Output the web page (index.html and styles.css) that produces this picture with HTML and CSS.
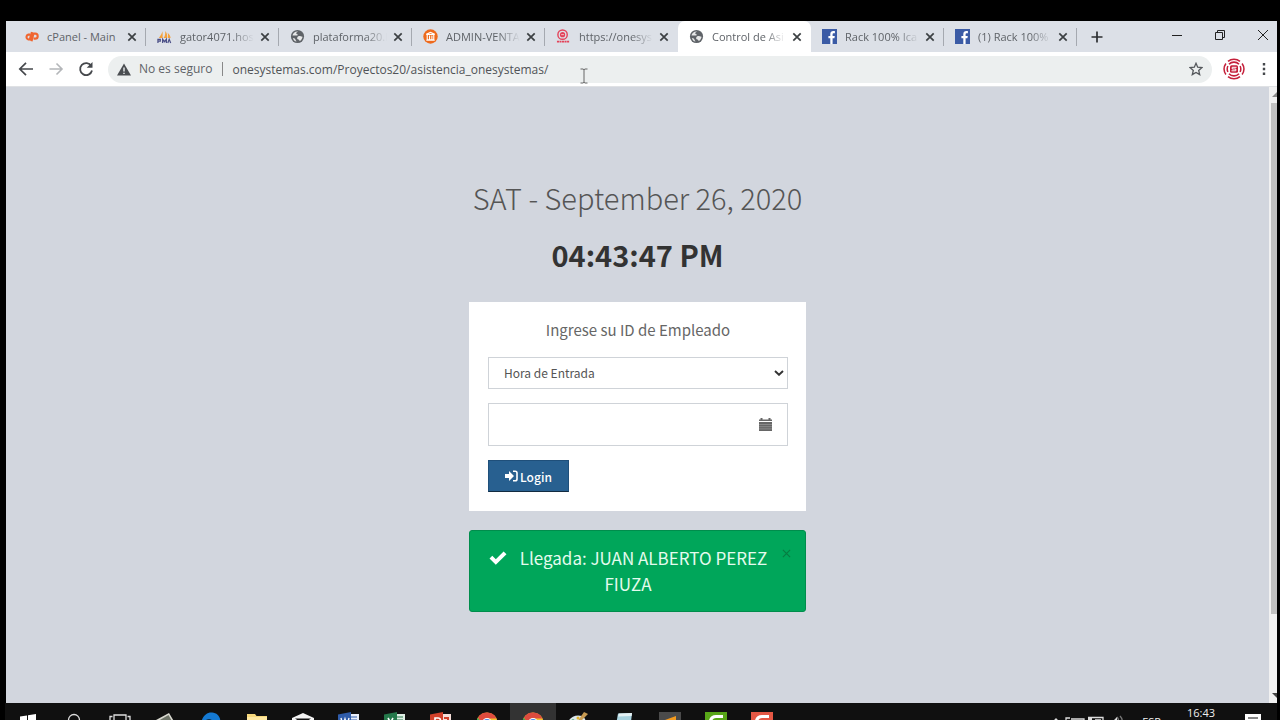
FILE: index.html
```html
<!DOCTYPE html>
<html lang="es">
<head>
<meta charset="utf-8">
<title>Control de Asistencia</title>
<link rel="stylesheet" href="styles.css">
</head>
<body>
<svg class="defs" aria-hidden="true">
  <symbol id="x" viewBox="0 0 10 10"><path d="M1.300 1.300l7.400 7.400M8.700 1.300L1.300 8.700" stroke="#3c4043" stroke-width="1.700" fill="none"/></symbol>
  <symbol id="globe" viewBox="0 0 16 16"><circle cx="8" cy="8" r="7" fill="#5f6368"/><path d="M8.600 2.600c-1 .9-2.300 1-1.900 2.100.3.900 1.700.5 1.700 1.500 0 1-1.700.7-2.900.7L2.700 7C3 4.500 5.200 2.400 8.600 2.600zM9.300 7.500c1.600-.2 2.400.7 4.100.7-.2 2-1.400 3.800-3.200 4.700-.2-1.400-.9-1.700-2-2-1-.3-.8-2.900 1.100-3.400zM3 9.500c1.800.2 2.700.8 2.900 2 .1.800.8.9 1 1.800C5 13 3.500 11.600 3 9.500z" fill="#fff" opacity=".85"/></symbol>
  <symbol id="fb" viewBox="0 0 15 15"><path d="M0 0h15v15H0z" fill="#3b5ba5"/><path d="M8.300 15V9.200H6.400V6.900h1.900V5.200c0-2 1.200-3.100 3-3.100.9 0 1.600.1 1.600.1v2h-1c-1 0-1.300.6-1.300 1.200v1.500h2.200l-.4 2.300h-1.800V15z" fill="#fff"/></symbol>
  <symbol id="rings" viewBox="0 0 22 22"><g fill="none" stroke="#c41f3a"><path d="M5 3.300A9.600 9.600 0 0 1 17 3.300M5 18.700A9.600 9.600 0 0 0 17 18.700M6 6.300A6.800 6.800 0 0 1 16 6.300M6 15.700A6.800 6.800 0 0 0 16 15.700" stroke-width="1.600"/><path d="M2.900 5.500A9.800 9.800 0 0 0 2.900 16.500M19.100 5.500A9.800 9.800 0 0 1 19.100 16.500M4.900 8a7 7 0 0 0 0 6M17.100 8a7 7 0 0 1 0 6" stroke-width="1.500"/></g><rect x="7" y="7.200" width="8" height="7.600" rx="1.500" fill="#c41f3a"/><path d="M13.500 9.300h-4.300V11h3.600v1.800H8.500" stroke="#fff" stroke-width="1" fill="none"/></symbol>
  <symbol id="chrome" viewBox="0 0 22 22"><circle cx="11" cy="11" r="10.500" fill="#f2c230"/><path d="M1.900 5.800A10.500 10.500 0 0 1 20.500 6.500H11L7 13z" fill="#dd4b3e"/><path d="M1.900 5.800A10.500 10.500 0 0 0 11 21.500L14 14H7z" fill="#35a853"/><circle cx="11" cy="11" r="5" fill="#fff"/><circle cx="11" cy="11" r="4" fill="#4a86e8"/></symbol>
</svg>
<div class="window">
  <header class="tabs">
    <div class="tab"><svg class="fav" viewBox="0 0 16 16"><g fill="none" stroke="#f0652f" stroke-width="2.300"><path d="M6.500 6H4.600a2.700 2.700 0 0 0 0 5.200h1.600L8.500 3.200M8 13L10 5h2a2.500 2.500 0 0 1 0 5.200H10.300"/></g></svg><span class="name">cPanel - Main</span><button class="close" aria-label="Cerrar"><svg><use href="#x"/></svg></button></div>
    <div class="tab"><svg class="fav" viewBox="0 0 16 16"><path d="M2 9.500C4 7 5.500 4 6 2.500V9.500zM7 9.500C9 7 9 4 8.700 2c2 2 2.500 5 2 7.500zM11.500 9.500c.5-2 .3-4-.2-5.500 2 1.500 3 3.500 3.200 5.500z" fill="#f5a13a"/><path d="M1 15v-4h2.500v2H1M6 15v-4l2 2.500L10 11v4M11.500 15l1.500-4 1.600 4" fill="none" stroke="#4b4f87" stroke-width="1.300"/></svg><span class="name">gator4071.hos</span><button class="close" aria-label="Cerrar"><svg><use href="#x"/></svg></button></div>
    <div class="tab"><svg class="fav"><use href="#globe"/></svg><span class="name">plataforma20.l</span><button class="close" aria-label="Cerrar"><svg><use href="#x"/></svg></button></div>
    <div class="tab"><svg class="fav" viewBox="0 0 16 16"><circle cx="8" cy="8" r="7.700" fill="#ee6a1c"/><path d="M3.500 5.700L8 3.500l4.500 2.200zM4.500 6.500v5h7v-5M3.500 12h9M7 7v4M9.500 7v4" fill="none" stroke="#fff" stroke-width="1.200"/></svg><span class="name">ADMIN-VENTA</span><button class="close" aria-label="Cerrar"><svg><use href="#x"/></svg></button></div>
    <div class="tab"><svg class="fav" viewBox="0 0 16 16"><circle cx="7" cy="6" r="5" fill="none" stroke="#e3435a" stroke-width="1.500"/><circle cx="7" cy="6" r="2.800" fill="#e3435a"/><path d="M5.500 6h3" stroke="#f5c3cb"/><path d="M1 13.500h13" stroke="#e3435a" stroke-width="2" stroke-dasharray="2.200 .5"/></svg><span class="name">https://onesys</span><button class="close" aria-label="Cerrar"><svg><use href="#x"/></svg></button></div>
    <div class="tab active"><svg class="fav"><use href="#globe"/></svg><span class="name">Control de Asi</span><button class="close" aria-label="Cerrar"><svg><use href="#x"/></svg></button></div>
    <div class="tab"><svg class="fav"><use href="#fb"/></svg><span class="name">Rack 100% Ica</span><button class="close" aria-label="Cerrar"><svg><use href="#x"/></svg></button></div>
    <div class="tab"><svg class="fav"><use href="#fb"/></svg><span class="name">(1) Rack 100%</span><button class="close" aria-label="Cerrar"><svg><use href="#x"/></svg></button></div>
    <button class="new" aria-label="Nueva pestaña"><svg viewBox="0 0 12 12"><path d="M6 .5v11M.5 6h11" stroke="#2c2e31" stroke-width="1.700"/></svg></button>
    <div class="controls">
      <button aria-label="Minimizar"><svg viewBox="0 0 12 12"><path d="M1 6.500h10" stroke="#222"/></svg></button>
      <button aria-label="Restaurar"><svg viewBox="0 0 12 12"><path d="M1.500 3.500h7v7h-7zM3.500 3.500v-2h7v7h-2" fill="none" stroke="#222"/></svg></button>
      <button aria-label="Cerrar ventana"><svg viewBox="0 0 12 12"><path d="M1 1l10 10M11 1L1 11" stroke="#222"/></svg></button>
    </div>
  </header>
  <nav class="toolbar">
    <button class="nav" aria-label="Atrás"><svg viewBox="0 0 16 16"><path d="M15 8H2M8 1.800L1.800 8 8 14.200" fill="none" stroke="#45484c" stroke-width="1.700"/></svg></button>
    <button class="nav" aria-label="Adelante"><svg viewBox="0 0 16 16"><path d="M1.500 8h12M8.500 2.500L14 8l-5.500 5.500" fill="none" stroke="#b4b6b9" stroke-width="1.600"/></svg></button>
    <button class="nav" aria-label="Recargar"><svg viewBox="0 0 16 16"><path d="M13.300 5A6 6 0 1 0 14 9.500" fill="none" stroke="#45484c" stroke-width="1.800"/><path d="M14.500 1v5.800H8.700z" fill="#45484c"/></svg></button>
    <div class="address">
      <svg class="warn" viewBox="0 0 14 13"><path d="M7 .5L14 12.500H0z" fill="#4a4d51"/><path d="M7 4.500v4M7 9.700v1.400" stroke="#eceff0" stroke-width="1.400"/></svg>
      <span class="insecure">No es seguro</span>
      <input class="url" type="text" aria-label="Dirección" value="onesystemas.com/Proyectos20/asistencia_onesystemas/">
      <button class="star" aria-label="Marcador"><svg viewBox="0 0 14 14"><path d="M7 1.300l1.700 3.900 4.200.4-3.200 2.800 1 4.200L7 10.400l-3.700 2.200 1-4.200L1.100 5.600l4.200-.4z" fill="none" stroke="#55585c" stroke-width="1.300"/></svg></button>
    </div>
    <button class="profile" aria-label="Perfil"><svg><use href="#rings"/></svg></button>
    <button class="more" aria-label="Menú"><svg viewBox="0 0 4 14"><path d="M.8 1h2.400v2.400H.8zM.8 5.800h2.400v2.400H.8zM.8 10.600h2.400V13H.8z" fill="#45484c"/></svg></button>
  </nav>
  <div class="view">
    <main class="page">
      <div class="login">
        <p class="date">SAT - September 26, 2020</p>
        <p class="time">04:43:47 PM</p>
        <form class="card">
          <h1 class="title">Ingrese su ID de Empleado</h1>
          <div class="selectwrap">
            <select class="field" aria-label="Tipo de registro"><option>Hora de Entrada</option><option>Hora de Salida</option></select>
            <svg class="chev" viewBox="0 0 10 6"><path d="M1 1l4 3.800L9 1" fill="none" stroke="#333" stroke-width="1.900"/></svg>
          </div>
          <div class="idrow">
            <input type="text" aria-label="ID de Empleado">
            <svg viewBox="0 0 13 13"><path d="M0 3V1.500h1.500V0h2v1.500h6V0h2v1.500H13V3zM0 4h13v9H0z" fill="#666"/><path d="M0 6.500h13M0 8.700h13M0 10.900h13" stroke="#a5a5a5" stroke-width=".6"/></svg>
          </div>
          <button class="submit" type="button"><svg viewBox="0 0 13 12"><path d="M0 4h4V1l5 5-5 5V8H0z" fill="#fff"/><path d="M8 1.300h2.200c1.200 0 1.800.6 1.800 1.800v5.800c0 1.200-.6 1.800-1.800 1.800H8" fill="none" stroke="#fff" stroke-width="1.600"/></svg>Login</button>
        </form>
        <div class="alert" role="status">
          <p class="message"><svg class="check" viewBox="0 0 18 14"><path d="M.5 7.500L3.300 4.700l3.500 3.500L14.600.5l2.900 2.800L6.800 13.700z" fill="#fff"/></svg>Llegada: JUAN ALBERTO PEREZ FIUZA</p>
          <button class="dismiss" aria-label="Descartar"><svg viewBox="0 0 10 10"><path d="M1 1l8 8M9 1L1 9" stroke="#077c42" stroke-width="1.300"/></svg></button>
        </div>
      </div>
    </main>
    <div class="scroll"><svg viewBox="0 0 8 16"><path d="M8 5v5H3z" fill="#8b8b8b"/></svg><div class="thumb"></div><svg class="down" viewBox="0 0 8 16"><path d="M3 6h5v5z" fill="#444"/></svg></div>
  </div>
</div>
<footer class="taskbar">
  <div class="apps">
    <button aria-label="Inicio"><svg viewBox="0 0 22 22"><path d="M3 4.500l7-1V11H3zM11 3.300L19 2v9h-8zM3 12h7v7l-7-1zM11 12h8v9l-8-1.500z" fill="#fff"/></svg></button>
    <button aria-label="Buscar"><svg viewBox="0 0 22 22"><circle cx="11" cy="8" r="5.500" fill="none" stroke="#ddd" stroke-width="1.300"/></svg></button>
    <button aria-label="Vista de tareas"><svg viewBox="0 0 22 22"><path d="M5 17V3h12v14M1 17V4.500h2.500M21 17V4.500h-2.500" fill="none" stroke="#ddd" stroke-width="1.300"/></svg></button>
    <button aria-label="Imágenes"><svg viewBox="0 0 22 22"><path d="M1 8L14 1l6 10-12 7z" fill="#d8d8cf"/><path d="M3 9L13.500 3l4 7-9 5z" fill="#6e7468"/></svg></button>
    <button aria-label="Edge"><svg viewBox="0 0 22 22"><path d="M1 12C2 4 7 0 12 .5 18 1 21 5 20.500 13H8c-1-4 5-5 6-2 0-4-8-6-13 1z" fill="#1479d2"/></svg></button>
    <button aria-label="Explorador"><svg viewBox="0 0 22 22"><path d="M1 2h8l1.500 2H21v14H1z" fill="#f6d77a"/><path d="M1 5h20v3H1z" fill="#ffe8a0"/></svg></button>
    <button aria-label="Correo"><svg viewBox="0 0 22 22"><path d="M0 6l11-5 11 5v14H0z" fill="#f4f4f4"/><path d="M3 6.500h16L11 12z" fill="#111"/></svg></button>
    <button aria-label="Word"><svg viewBox="0 0 22 22"><path d="M11 2h10v17H11z" fill="#e9eef9"/><path d="M13 5h6M13 8h6" stroke="#2f5caa"/><path d="M0 2.500L13 0v22L0 19z" fill="#2f5caa"/><path d="M3 6l2 8 2-7 2 7 2-8" fill="none" stroke="#fff" stroke-width="1.400"/></svg></button>
    <button aria-label="Excel"><svg viewBox="0 0 22 22"><path d="M11 2h10v17H11z" fill="#dfeee4"/><path d="M13 5h6M13 8h6" stroke="#24784a"/><path d="M0 2.500L13 0v22L0 19z" fill="#24784a"/><path d="M4 6l5 9M9 6l-5 9" fill="none" stroke="#fff" stroke-width="1.600"/></svg></button>
    <button aria-label="PowerPoint"><svg viewBox="0 0 22 22"><path d="M11 2h10v17H11z" fill="#f6dfd9"/><path d="M14 6h4v4" stroke="#d2412a" stroke-width="2" fill="none"/><path d="M0 2.500L13 0v22L0 19z" fill="#d2412a"/><path d="M5 16V6h3a2 2 0 0 1 0 5H5" fill="none" stroke="#fff" stroke-width="1.600"/></svg></button>
    <button aria-label="Chrome"><svg><use href="#chrome"/></svg></button>
    <button class="current" aria-label="Chrome, ventana actual"><svg><use href="#chrome"/></svg></button>
    <button aria-label="Paint"><svg viewBox="0 0 22 22"><path d="M1 11C2 5 9 2 15 4c4 2 5 7 2 13H3z" fill="#dbe7ec"/><path d="M17 0l4 2-9 9-2-1z" fill="#c89b52"/><circle cx="6" cy="9" r="1.700" fill="#3da35a"/><circle cx="11" cy="6" r="1.500" fill="#e2b32c"/></svg></button>
    <button aria-label="Bloc de notas"><svg viewBox="0 0 22 22"><path d="M5 1.500L19 1l-2 18H2z" fill="#a9d3df"/><path d="M6 1.500L19 1l-.4 3-13.500.4z" fill="#e5f2f5"/></svg></button>
    <button aria-label="Sublime Text"><svg viewBox="0 0 22 22"><path d="M0 0h22v22H0z" fill="#4a4a4a"/><path d="M17 4v4L6 12V8z" fill="#f39a1e"/></svg></button>
    <button aria-label="Camtasia"><svg viewBox="0 0 22 22"><path d="M0 0h22v22H0z" fill="#58a618"/><path d="M18 4.500h-7c-4 0-6 3-6 8" fill="none" stroke="#fff" stroke-width="3"/></svg></button>
    <button aria-label="Grabador"><svg viewBox="0 0 22 22"><path d="M0 0h22v22H0z" fill="#e45744"/><path d="M18 4.500h-7c-4 0-6 3-6 8" fill="none" stroke="#fff" stroke-width="3"/></svg></button>
  </div>
  <div class="tray">
    <svg viewBox="0 0 84 16"><g fill="none" stroke="#ddd" stroke-width="1.300"><path d="M2 12l4-4 4 4M16 14V7h4M21 8h13v6M38 6.500h15V14M42 9v5M45 9h6"/><path d="M67 6c2 2 2 6 0 8M70 5c3 3 3 7 0 10" stroke="#777"/></g><path d="M60 10h3l4-4v9h-7zM38 6h4v8h-4z" fill="#ddd"/></svg>
    <span class="lang">ESP</span>
    <time class="clock">16:43</time>
    <svg class="note" viewBox="0 0 16 16"><path d="M0 0h16v14H0z" fill="#fff"/><path d="M3 4h10M3 7h10" stroke="#111"/></svg>
  </div>
</footer>
<svg class="cursor" viewBox="0 0 8 16" aria-hidden="true"><path d="M.5 1H3l1 .7L5 1h2.500M4 1.500v13M.5 15H3l1-.7 1 .7h2.500" fill="none" stroke="#666"/></svg>
</body>
</html>
```
FILE: styles.css
```css
* { box-sizing: border-box; }
body {
  margin: 0;
  height: 100vh;
  display: flex;
  flex-direction: column;
  overflow: hidden;
  background: #000;
  font-family: "Open Sans", "Noto Sans", sans-serif;
  color: #5f6368;
}
button { padding: 0; border: 0; background: none; font: inherit; color: inherit; display: flex; align-items: center; justify-content: center; }
svg { display: block; flex: none; }
p, h1 { margin: 0; }
.defs { position: absolute; width: 0; height: 0; }

.window { flex: 1; min-height: 0; display: flex; flex-direction: column; margin: 21px 3px 0 6px; }

.tabs { display: flex; height: 31px; padding-left: 7px; background: #dce0e7; }
.tab { position: relative; display: flex; align-items: center; flex: 0 1 133px; min-width: 0; padding: 0 9px 0 11px; font-size: 11px; }
.tab::after { content: ""; position: absolute; right: 0; top: 7px; width: 1px; height: 18px; background: #a5a9b0; }
.tab.active { background: #fff; border-radius: 7px 7px 0 0; }
.tab.active::after, .tab:has(+ .active)::after { display: none; }
.fav { width: 15px; height: 15px; margin-right: 8px; }
.name { flex: 1; min-width: 0; white-space: nowrap; mask-image: linear-gradient(to right, #000 70%, transparent); }
.tab:first-child .name { mask-image: none; }
.close { margin-left: 6px; }
.close svg { width: 10px; height: 10px; }
.new { margin-left: 14px; }
.new svg { width: 12px; height: 12px; }
.controls { display: flex; align-items: center; gap: 31px; margin-left: auto; padding: 0 8px 4px 0; }
.controls svg { width: 12px; height: 12px; }

.toolbar { display: flex; align-items: center; height: 35px; padding: 0 11px 0 12px; background: #fff; border-bottom: 1px solid #dfe1e4; }
.nav { margin-right: 14px; }
.nav svg { width: 16px; height: 16px; }
.address { flex: 1; display: flex; align-items: center; height: 27px; padding: 0 9px; border-radius: 14px; background: #ecefef; font-size: 12px; }
.warn { width: 14px; height: 13px; margin-right: 8px; }
.insecure { padding-right: 10px; border-right: 1px solid #888; line-height: 14px; }
.url { flex: 1; border: 0; outline: 0; padding: 0 0 0 9px; background: none; font: inherit; color: #505357; }
.star svg { width: 14px; height: 14px; }
.profile { margin-left: 11px; }
.profile svg { width: 22px; height: 22px; }
.more { margin-left: 17px; }
.more svg { width: 4px; height: 14px; }

.view { flex: 1; min-height: 0; display: flex; }
.page { flex: 1; display: flex; justify-content: center; padding-top: 86px; background: #d2d6de; font-family: "Noto Sans CJK SC", sans-serif; }
.scroll { display: flex; flex-direction: column; width: 8px; background: #f1f1f1; }
.scroll svg { width: 8px; height: 16px; }
.thumb { flex: 0 1 511px; margin-left: 2px; background: #c1c1c1; }
.scroll .down { margin-top: auto; }

.login { width: 337px; text-align: center; color: #333; }
.date { font-size: 29px; line-height: 48px; font-weight: 300; white-space: nowrap; color: #555; }
.time { margin-top: 9px; font-size: 29px; line-height: 48px; font-weight: 700; }
.card { margin-top: 24px; padding: 18px 18px 19px 19px; background: #fff; color: #666; }
.title { font-size: 15px; line-height: 20px; font-weight: 400; }
.selectwrap { position: relative; margin-top: 17px; }
.field { appearance: none; width: 100%; height: 32px; padding: 0 15px 2px; border: 1px solid #cfd3d8; border-radius: 0; background: #fff; font: inherit; font-size: 12px; color: #555; display: block; }
.chev { position: absolute; right: 4px; top: 13px; width: 10px; height: 6px; pointer-events: none; }
.idrow { display: flex; align-items: center; height: 43px; margin-top: 14px; padding-right: 15px; border: 1px solid #cfd3d8; }
.idrow input { flex: 1; min-width: 0; height: 100%; border: 0; outline: 0; padding: 0 14px; font: inherit; }
.idrow svg { width: 13px; height: 13px; }
.submit { gap: 2px; width: 81px; height: 32px; margin-top: 14px; border: 1px solid #1f4f7a; border-bottom-color: #122b40; background: #286090; color: #fff; font-size: 12px; font-weight: 500; }
.submit svg { width: 13px; height: 12px; }
.alert { display: flex; align-items: flex-start; margin-top: 19px; padding: 14px; border: 1px solid #008d4c; border-radius: 3px; background: #00a65a; color: #e4fbee; }
.check { display: inline-block; width: 18px; height: 14px; margin-right: 13px; }
.message { flex: 1; padding-right: 10px; font-size: 17px; line-height: 26px; }
.dismiss { margin-top: 4px; }
.dismiss svg { width: 9px; height: 9px; }

.taskbar { display: flex; height: 17px; overflow: hidden; background: #101010; margin: 0 3px 0 5px; }
.apps { display: flex; flex: 0 0 780px; height: 40px; }
.apps button { flex: 1; height: 40px; padding-top: 9px; align-items: flex-start; }
.apps .current { background: #333; }
.apps svg { width: 22px; height: 22px; }
.tray { display: flex; align-items: flex-start; height: 40px; margin-left: auto; padding-right: 16px; color: #eee; font-size: 11px; line-height: 14px; }
.tray svg { width: 84px; height: 16px; margin-top: 8px; }
.tray .lang { margin: 12px 26px 0 8px; }
.tray .clock { margin-top: 3px; }
.tray .note { width: 16px; margin: 11px 0 0 30px; }

.cursor { position: absolute; left: 580px; top: 68px; width: 8px; height: 16px; }
```
